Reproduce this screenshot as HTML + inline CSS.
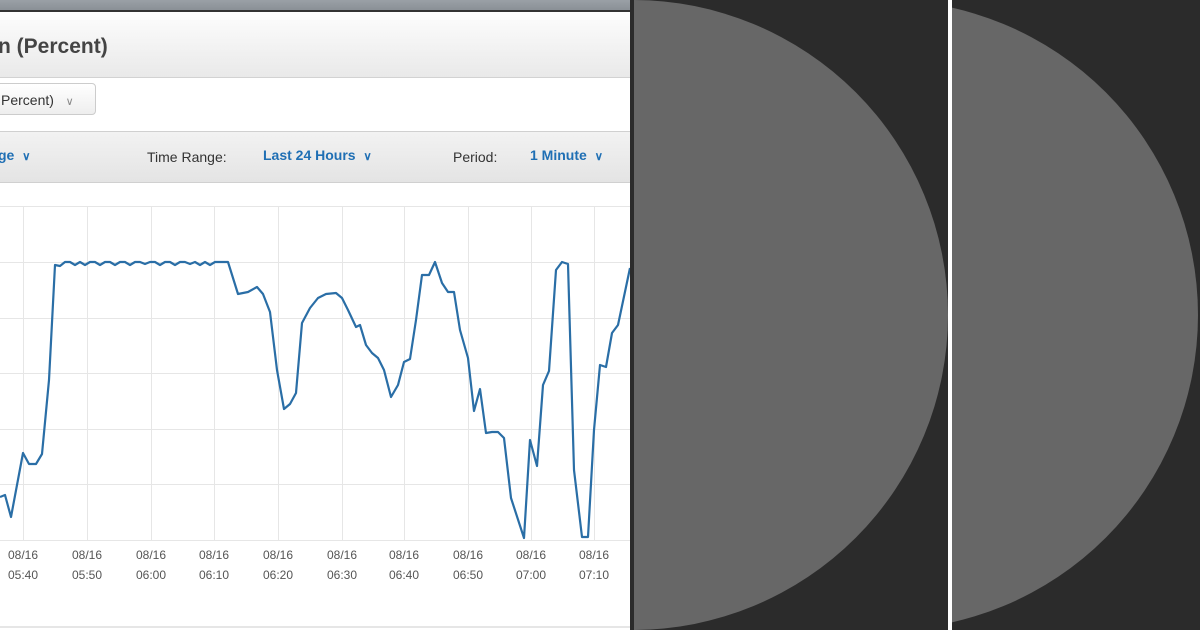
<!DOCTYPE html>
<html><head><meta charset="utf-8"><style>
*{margin:0;padding:0;box-sizing:border-box}
body{width:1200px;height:630px;overflow:hidden;background:#2b2b2b;font-family:"Liberation Sans",Arial,sans-serif;position:relative}
#left{position:absolute;left:0;top:0;width:630px;height:630px;background:#fff;overflow:hidden}
.top{position:absolute;left:0;top:0;width:630px;height:10px;background:linear-gradient(#9aa0a6,#8a9096)}
.topl{position:absolute;left:0;top:10px;width:630px;height:2px;background:#333}
.hdr{position:absolute;left:0;top:12px;width:630px;height:66px;background:linear-gradient(#fdfdfd,#e9e9e9);border-bottom:1px solid #d2d2d2}
.title{position:absolute;left:-2px;top:23px;font-size:21px;font-weight:bold;color:#444}
.dd{position:absolute;left:-10px;top:83px;width:106px;height:32px;border:1px solid #ccc;border-radius:4px;background:linear-gradient(#fff,#eee);font-size:14px;color:#333;padding:8px 0 0 10px}
.bar{position:absolute;left:0;top:131px;width:630px;height:52px;background:linear-gradient(#f2f2f2,#e4e4e4);border-top:1px solid #d0d0d0;border-bottom:1px solid #d0d0d0;font-size:14px}
.bar span{position:absolute;top:15px}
.lab{color:#333}.blu{color:#1f6fb4;font-weight:bold}
.xl{position:absolute;font-size:12px;color:#555;text-align:center;width:50px;line-height:20px}
</style></head><body>
<div id="left">
<div class="top"></div><div class="topl"></div>
<div class="hdr"><div class="title">n (Percent)</div></div>
<div class="dd">Percent) &nbsp;&nbsp;<span style="color:#888;font-size:11px">&#8744;</span></div>
<div class="bar">
<span class="blu" style="left:-2px">ge &nbsp;<small>&#8744;</small></span>
<span class="lab" style="left:147px;top:17px">Time Range:</span>
<span class="blu" style="left:263px">Last 24 Hours &nbsp;<small>&#8744;</small></span>
<span class="lab" style="left:453px;top:17px">Period:</span>
<span class="blu" style="left:530px">1 Minute &nbsp;<small>&#8744;</small></span>
</div>
<svg width="630" height="630" style="position:absolute;left:0;top:0">
<g stroke="#e6e6e6" stroke-width="1">
<line x1="0" y1="206.5" x2="630" y2="206.5"/><line x1="0" y1="262.5" x2="630" y2="262.5"/><line x1="0" y1="318.5" x2="630" y2="318.5"/><line x1="0" y1="373.5" x2="630" y2="373.5"/><line x1="0" y1="429.5" x2="630" y2="429.5"/><line x1="0" y1="484.5" x2="630" y2="484.5"/><line x1="0" y1="540.5" x2="630" y2="540.5"/>
<line x1="23.5" y1="206" x2="23.5" y2="540"/><line x1="87.5" y1="206" x2="87.5" y2="540"/><line x1="151.5" y1="206" x2="151.5" y2="540"/><line x1="214.5" y1="206" x2="214.5" y2="540"/><line x1="278.5" y1="206" x2="278.5" y2="540"/><line x1="342.5" y1="206" x2="342.5" y2="540"/><line x1="404.5" y1="206" x2="404.5" y2="540"/><line x1="468.5" y1="206" x2="468.5" y2="540"/><line x1="531.5" y1="206" x2="531.5" y2="540"/><line x1="594.5" y1="206" x2="594.5" y2="540"/>
</g>
<line x1="0" y1="627" x2="630" y2="627" stroke="#ccc"/>
<polyline fill="none" stroke="#2a6ea6" stroke-width="2.2" stroke-linejoin="round" points="0,497 5,495 11,517 23,453 29,464 36,464 42,454 49,380 55,265 60,266 65,262 70,262 75,265 80,262 85,265 90,262 95,262 100,265 105,262 110,262 115,265 120,262 125,262 130,265 135,262 140,262 145,264 150,262 155,262 160,265 165,262 170,262 175,265 180,262 185,262 190,264 195,262 200,265 205,262 210,265 215,262 222,262 228,262 238,294 248,292 257,287 263,294 270,312 277,370 284,409 290,404 296,393 302,323 310,308 318,298 326,294 336,293 342,298 348,310 356,327 360,325 366,345 372,353 378,358 384,370 391,397 398,385 404,362 410,359 416,320 422,275 429,275 435,262 442,283 448,292 454,292 460,330 468,358 474,411 480,389 486,433 492,432 498,432 504,438 511,498 524,538 530,440 537,466 543,385 549,371 556,270 562,262 568,264 574,470 582,537 588,537 594,430 600,365 606,367 612,333 618,325 630,268"/>
</svg>
<div class="xl" style="left:-2px;top:545px">08/16<br>05:40</div>
<div class="xl" style="left:62px;top:545px">08/16<br>05:50</div>
<div class="xl" style="left:126px;top:545px">08/16<br>06:00</div>
<div class="xl" style="left:189px;top:545px">08/16<br>06:10</div>
<div class="xl" style="left:253px;top:545px">08/16<br>06:20</div>
<div class="xl" style="left:317px;top:545px">08/16<br>06:30</div>
<div class="xl" style="left:379px;top:545px">08/16<br>06:40</div>
<div class="xl" style="left:443px;top:545px">08/16<br>06:50</div>
<div class="xl" style="left:506px;top:545px">08/16<br>07:00</div>
<div class="xl" style="left:569px;top:545px">08/16<br>07:10</div>
</div>
<svg width="1200" height="630" style="position:absolute;left:0;top:0">
<defs><clipPath id="c1"><rect x="634" y="0" width="314" height="630"/></clipPath><clipPath id="c2"><rect x="952" y="0" width="248" height="630"/></clipPath></defs>
<circle cx="633" cy="315" r="315" fill="#676767" clip-path="url(#c1)"/>
<rect x="948" y="0" width="4" height="630" fill="#fff"/>
<circle cx="883" cy="315" r="315" fill="#676767" clip-path="url(#c2)"/>
</svg>
</body></html>
